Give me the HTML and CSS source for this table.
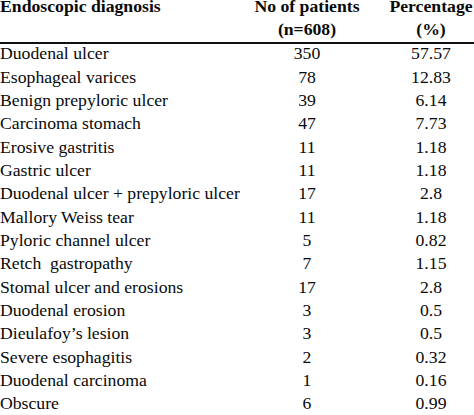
FILE: index.html
```html
<!DOCTYPE html>
<html>
<head>
<meta charset="utf-8">
<link rel="stylesheet" href="styles.css">
</head>
<body>
<div class="table">
  <div class="head">
    <div class="c1"><span class="l1">Endoscopic diagnosis</span></div>
    <div class="c2"><span class="l1">No of patients</span><span class="l2">(n=608)</span></div>
    <div class="c3"><span class="l1">Percentage</span><span class="l2">(%)</span></div>
  </div>
  <div class="body">
    <div class="row"><div class="c1">Duodenal ulcer</div><div class="c2">350</div><div class="c3">57.57</div></div>
    <div class="row"><div class="c1">Esophageal varices</div><div class="c2">78</div><div class="c3">12.83</div></div>
    <div class="row"><div class="c1">Benign prepyloric ulcer</div><div class="c2">39</div><div class="c3">6.14</div></div>
    <div class="row"><div class="c1">Carcinoma stomach</div><div class="c2">47</div><div class="c3">7.73</div></div>
    <div class="row"><div class="c1">Erosive gastritis</div><div class="c2">11</div><div class="c3">1.18</div></div>
    <div class="row"><div class="c1">Gastric ulcer</div><div class="c2">11</div><div class="c3">1.18</div></div>
    <div class="row"><div class="c1">Duodenal ulcer + prepyloric ulcer</div><div class="c2">17</div><div class="c3">2.8</div></div>
    <div class="row"><div class="c1">Mallory Weiss tear</div><div class="c2">11</div><div class="c3">1.18</div></div>
    <div class="row"><div class="c1">Pyloric channel ulcer</div><div class="c2">5</div><div class="c3">0.82</div></div>
    <div class="row"><div class="c1">Retch&nbsp; gastropathy</div><div class="c2">7</div><div class="c3">1.15</div></div>
    <div class="row"><div class="c1">Stomal ulcer and erosions</div><div class="c2">17</div><div class="c3">2.8</div></div>
    <div class="row"><div class="c1">Duodenal erosion</div><div class="c2">3</div><div class="c3">0.5</div></div>
    <div class="row"><div class="c1">Dieulafoy’s lesion</div><div class="c2">3</div><div class="c3">0.5</div></div>
    <div class="row"><div class="c1">Severe esophagitis</div><div class="c2">2</div><div class="c3">0.32</div></div>
    <div class="row"><div class="c1">Duodenal carcinoma</div><div class="c2">1</div><div class="c3">0.16</div></div>
    <div class="row"><div class="c1">Obscure</div><div class="c2">6</div><div class="c3">0.99</div></div>
  </div>
</div>
</body>
</html>
```

FILE: styles.css
```css
html, body {
  margin: 0;
  padding: 0;
  background: #fff;
  overflow: hidden;
}
body {
  width: 474px;
  height: 415px;
  font-family: "Liberation Serif", "Times New Roman", serif;
  font-size: 17.7px;
  color: #0a0a0a;
}
.table {
  width: 498px;
}
.head,
.row {
  display: grid;
  grid-template-columns: 250px 114px 134px;
}
.head {
  width: 474px;
  grid-template-columns: 250px 114px 110px;
  font-weight: bold;
  padding-bottom: 2.2px;
  border-bottom: 2px solid #111;
}
.head .c3 {
  width: 134px;
}
.l1 {
  display: block;
  line-height: 13px;
}
.l2 {
  display: block;
  line-height: 22.5px;
  padding-top: 4.8px;
}
.body {
  margin-top: -2px;
}
.row {
  line-height: 23.33px;
  height: 23.33px;
}
.c1 {
  text-align: left;
  white-space: nowrap;
}
.c2,
.c3 {
  text-align: center;
  white-space: nowrap;
}
```
